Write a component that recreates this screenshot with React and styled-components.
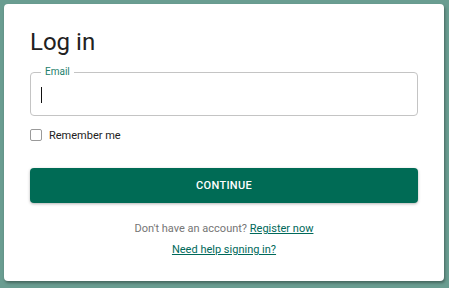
import React from 'react';
import styled, { createGlobalStyle } from 'styled-components';

const Global = createGlobalStyle`
  html, body {
    margin: 0;
    padding: 0;
    background: #6a9d91;
    font-family: Roboto, "Liberation Sans", sans-serif;
  }
`;

const Page = styled.div`
  width: 449px;
  height: 288px;
  padding: 4px 0 0 4px;
  box-sizing: border-box;
`;

const Card = styled.div`
  width: 440px;
  height: 277px;
  box-sizing: border-box;
  background: #fff;
  border-radius: 4px;
  box-shadow: 1px 2px 3px rgba(0, 0, 0, 0.35);
  padding: 24px 26px 0 26px;
  display: flex;
  flex-direction: column;
`;

const Title = styled.h1`
  margin: 0;
  font-size: 24px;
  font-weight: 400;
  line-height: 28px;
  color: #212121;
`;

const Field = styled.div`
  position: relative;
  margin-top: 16px;
  height: 44px;
`;

const Input = styled.input`
  width: 100%;
  height: 100%;
  box-sizing: border-box;
  border: 1px solid #c4c4c4;
  border-radius: 4px;
  padding: 0 10px;
  font: inherit;
  font-size: 14px;
  outline: none;
`;

const Label = styled.span`
  position: absolute;
  left: 11px;
  top: -6px;
  padding: 0 4px;
  background: #fff;
  font-size: 10px;
  line-height: 12px;
  color: #23806c;
`;

const Caret = styled.span`
  position: absolute;
  left: 11px;
  top: 15px;
  width: 1px;
  height: 16px;
  background: #111;
`;

const CheckRow = styled.label`
  display: flex;
  align-items: center;
  gap: 7px;
  margin-top: 12px;
  height: 14px;
  font-size: 11px;
  color: #212121;
`;

const Box = styled.span`
  width: 10px;
  height: 10px;
  border: 1px solid #9a9a9a;
  border-radius: 2px;
`;

const Button = styled.button`
  margin-top: 26px;
  height: 35px;
  width: 100%;
  border: none;
  border-radius: 4px;
  background: #006b55;
  color: #fff;
  font-family: inherit;
  font-size: 11px;
  font-weight: 500;
  letter-spacing: 0.3px;
  box-shadow: 0 1px 3px rgba(0, 0, 0, 0.3);
`;

const Line = styled.p`
  margin: ${p => p.first ? '18px' : '6px'} 0 0;
  text-align: center;
  font-size: 11px;
  line-height: 15px;
  color: #757575;
`;

const A = styled.a`
  color: #00695a;
  text-decoration: underline;
`;

export default function App() {
  return (
    <Page>
      <Global />
      <Card>
        <Title>Log in</Title>
        <Field>
          <Input type="email" />
          <Label>Email</Label>
          <Caret />
        </Field>
        <CheckRow>
          <Box />
          Remember me
        </CheckRow>
        <Button>CONTINUE</Button>
        <Line first>
          Don't have an account? <A href="#">Register now</A>
        </Line>
        <Line>
          <A href="#">Need help signing in?</A>
        </Line>
      </Card>
    </Page>
  );
}
